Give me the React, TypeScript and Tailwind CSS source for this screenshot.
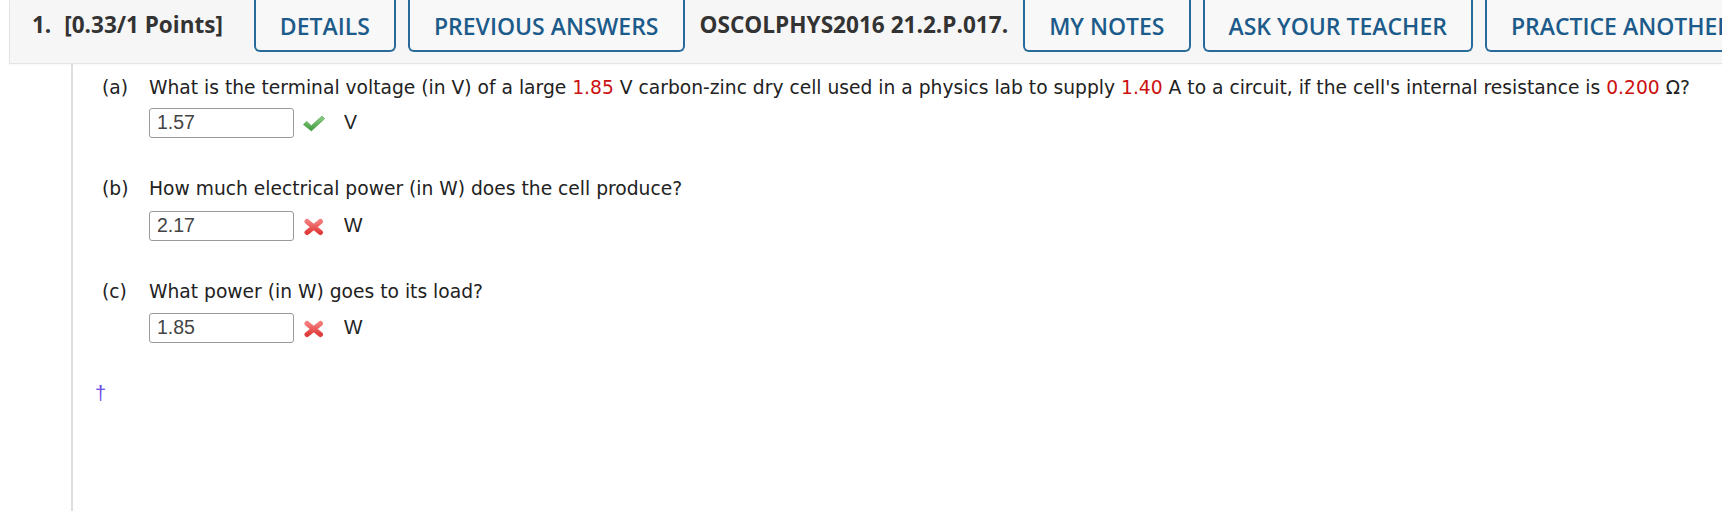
import React from "react";

function Check() {
  return (
    <svg width="24" height="17" viewBox="0 0 22 16" className="block">
      <defs>
        <linearGradient id="gc" x1="0" y1="0" x2="0" y2="1">
          <stop offset="0" stopColor="#8fd18a" />
          <stop offset="1" stopColor="#3f9a3c" />
        </linearGradient>
      </defs>
      <path d="M1 9 L4 6 L8.5 10 L18.5 1 L21 3.5 L8.5 15 Z" fill="url(#gc)" stroke="#4d9e4a" strokeWidth="0.6" strokeLinejoin="round" />
    </svg>
  );
}

function Cross() {
  return (
    <svg width="20" height="19" viewBox="0 0 20 19" className="block">
      <defs>
        <linearGradient id="gx" x1="0" y1="0" x2="0" y2="1">
          <stop offset="0" stopColor="#f47a7a" />
          <stop offset="1" stopColor="#e03c3c" />
        </linearGradient>
      </defs>
      <path d="M3 4.5 L16.5 15.5 M16.5 4.5 L3 15.5" stroke="url(#gx)" strokeWidth="5" strokeLinecap="round" />
    </svg>
  );
}

function Btn({ children }: { children: React.ReactNode }) {
  return (
    <div className="h-[52px] shrink-0 border-2 border-t-0 border-[#286b9a] rounded-b-[6px] bg-[#f8f8f8] px-[24px] flex items-center pt-[2px] text-[23px] font-semibold text-[#1c5b8a] font-['Open_Sans',sans-serif] whitespace-nowrap">
      {children}
    </div>
  );
}

function Answer({ value, ok, unit }: { value: string; ok: boolean; unit: string }) {
  return (
    <div className="flex items-center h-[30px]">
      <div className="w-[145px] h-[30px] border border-[#9a9a9a] rounded-[3px] bg-white flex items-center pl-[7px] text-[19.5px] text-[#444] font-['Liberation_Sans',Arial,sans-serif]">
        {value}
      </div>
      <div className="ml-[8px] w-[24px] flex justify-center">{ok ? <Check /> : <Cross />}</div>
      <div className="ml-[18px] text-[19.5px] text-[#222] font-['Liberation_Sans',Arial,sans-serif]">{unit}</div>
    </div>
  );
}

const R = ({ children }: { children: React.ReactNode }) => <span className="text-[#cc1111]">{children}</span>;

export default function App() {
  return (
    <div className="w-[1722px] h-[511px] overflow-hidden bg-white">
      <div className="ml-[9px] h-[64px] bg-[#f6f6f6] border-l border-b border-[#e4e4e4] flex items-start overflow-hidden whitespace-nowrap shadow-[0_1px_2px_rgba(0,0,0,0.04)]">
        <div className="pl-[22px] h-[50px] flex items-center font-['Open_Sans',sans-serif] font-bold text-[22.5px] text-[#333] shrink-0">
          <span>1.</span>
          <span className="ml-[13px]">[0.33/1 Points]</span>
        </div>
        <div className="ml-[31px] flex items-start gap-[12px] shrink-0">
          <Btn>DETAILS</Btn>
          <Btn>PREVIOUS ANSWERS</Btn>
          <div className="h-[50px] flex items-center px-[3px] font-['Open_Sans',sans-serif] font-bold text-[22.6px] text-[#333] shrink-0">
            OSCOLPHYS2016 21.2.P.017.
          </div>
          <Btn>MY NOTES</Btn>
          <Btn>ASK YOUR TEACHER</Btn>
          <Btn>PRACTICE ANOTHER</Btn>
        </div>
      </div>
      <div className="ml-[71px] h-[447px] border-l-2 border-[#dedede] pl-[29px] pt-[12px] text-[#222] font-['DejaVu_Sans',sans-serif] text-[18.7px]">
        <div className="flex">
          <div className="w-[47px] leading-[24px]">(a)</div>
          <div>
            <div className="leading-[24px] whitespace-nowrap">
              What is the terminal voltage (in V) of a large <R>1.85</R> V carbon-zinc dry cell used in a physics lab to supply <R>1.40</R> A to a circuit, if the cell's internal resistance is <R>0.200</R> Ω?
            </div>
            <div className="mt-[8px]">
              <Answer value="1.57" ok unit="V" />
            </div>
          </div>
        </div>
        <div className="flex mt-[39px]">
          <div className="w-[47px] leading-[24px]">(b)</div>
          <div>
            <div className="leading-[24px] whitespace-nowrap">How much electrical power (in W) does the cell produce?</div>
            <div className="mt-[10px]">
              <Answer value="2.17" ok={false} unit="W" />
            </div>
          </div>
        </div>
        <div className="flex mt-[39px]">
          <div className="w-[47px] leading-[24px]">(c)</div>
          <div>
            <div className="leading-[24px] whitespace-nowrap">What power (in W) goes to its load?</div>
            <div className="mt-[9px]">
              <Answer value="1.85" ok={false} unit="W" />
            </div>
          </div>
        </div>
        <div className="mt-[38px] -ml-[7px] text-[#6a4ce8] text-[20px] leading-[24px] font-['Liberation_Sans',Arial,sans-serif]">†</div>
      </div>
    </div>
  );
}
